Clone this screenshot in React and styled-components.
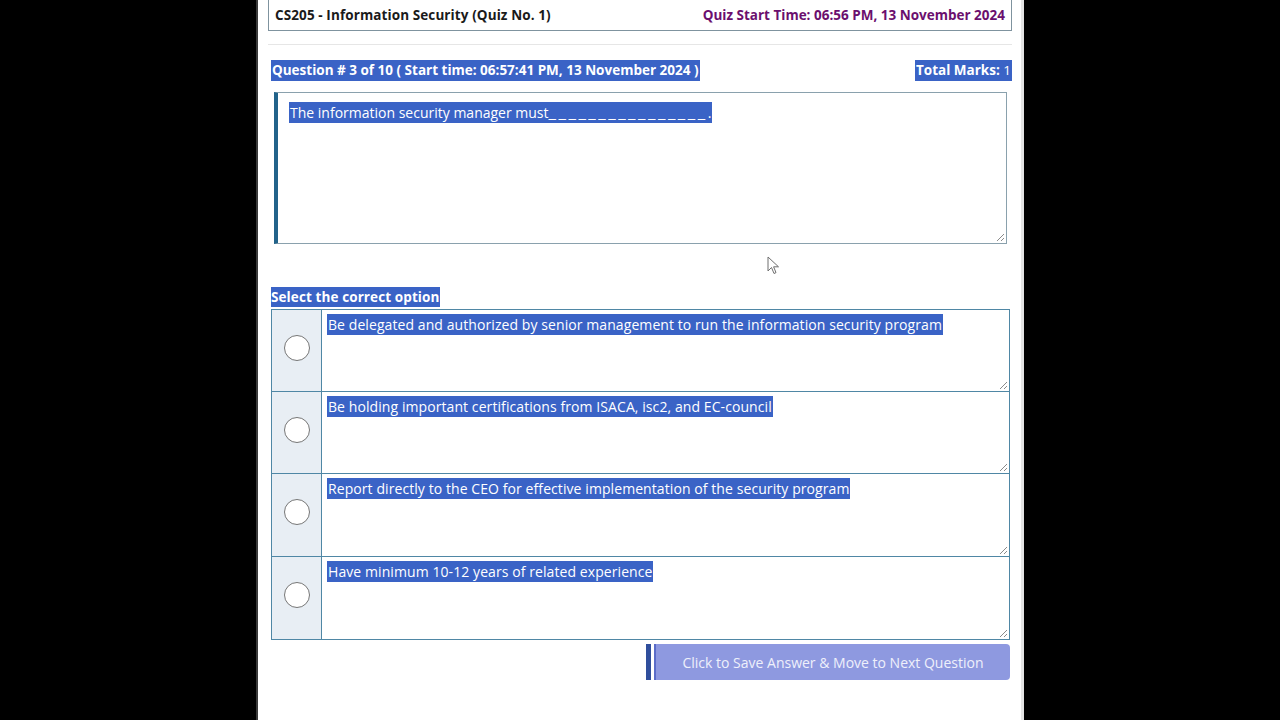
import React from "react";
import styled, { createGlobalStyle } from "styled-components";

const Global = createGlobalStyle`
  html, body { margin: 0; padding: 0; background: #000; }
  body { font-family: "Open Sans", "Noto Sans", sans-serif; }
  * { box-sizing: border-box; }
`;

const Page = styled.div`
  width: 1280px;
  height: 720px;
  background: #000;
  display: flex;
  justify-content: center;
  overflow: hidden;
`;

const Panel = styled.div`
  position: relative;
  width: 768px;
  height: 720px;
  background: #fff;
  border-left: 2px solid #3a3a3a;
  border-right: 3px solid #e4e4e4;
  padding: 0 9px 0 10px;
  display: flex;
  flex-direction: column;
`;

const Header = styled.div`
  margin-top: -1px;
  height: 32px;
  border: 1px solid #7f939f;
  display: flex;
  align-items: center;
  justify-content: space-between;
  padding: 0 6px 0 6px;
  font-size: 13.5px;
  font-weight: 700;
`;

const Course = styled.span`
  color: #1a1a1a;
  letter-spacing: 0.1px;
`;

const StartTime = styled.span`
  color: #6b0f6e;
  letter-spacing: 0;
`;

const Rule = styled.hr`
  margin: 13px 0 0 0;
  border: none;
  border-top: 1px solid #e6e6e6;
`;

const Sel = styled.span`
  background: #3a63c6;
  color: #fff;
  padding: ${p => p.$pad || "1px 1px"};
`;

const Gaps = styled.span`
  font-size: 17px;
  line-height: 0;
  letter-spacing: 2.5px;
`;

const QRow = styled.div`
  margin-top: 15px;
  display: flex;
  justify-content: space-between;
  align-items: center;
  padding-left: 3px;
  font-size: 13.5px;
  font-weight: 700;
  line-height: 19px;
  letter-spacing: 0;
`;

const Light = styled.span`
  font-weight: 400;
`;

const QuestionBox = styled.div`
  position: relative;
  margin: 11px 5px 0 6px;
  height: 152px;
  border: 1px solid #8aa1ad;
  border-left: 4px solid #22638a;
  padding: 11px 11px;
  font-size: 14px;
  line-height: 18px;
`;

const Resize = styled.svg`
  position: absolute;
  right: 1px;
  bottom: 1px;
`;

const Label = styled.div`
  margin-top: 44px;
  padding-left: 3px;
  font-size: 13.5px;
  font-weight: 700;
  line-height: 18px;
  letter-spacing: 0.1px;
`;

const Options = styled.div`
  margin: 3px 2px 0 3px;
  border: 1px solid #4f87a5;
  display: flex;
  flex-direction: column;
`;

const OptionRow = styled.div`
  display: grid;
  grid-template-columns: 50px 1fr;
  height: ${p => p.$h}px;
  border-top: ${p => (p.$first ? "none" : "1px solid #4f87a5")};
`;

const RadioCell = styled.div`
  background: #e8eef4;
  border-right: 1px solid #4f87a5;
  display: flex;
  align-items: center;
  justify-content: center;
`;

const Radio = styled.span`
  width: 26px;
  height: 26px;
  border-radius: 50%;
  border: 1.5px solid #767676;
  background: #fff;
  margin-bottom: 6px;
`;

const AnswerCell = styled.div`
  position: relative;
  padding: 6px 5px;
  font-size: 14px;
  line-height: 18px;
  letter-spacing: 0.08px;
`;

const Footer = styled.div`
  margin: 4px 2px 0 0;
  display: flex;
  justify-content: flex-end;
  align-items: stretch;
  gap: 3px;
  height: 36px;
`;

const SelBar = styled.span`
  width: 5px;
  background: #2f4e9c;
`;

const SaveButton = styled.button`
  width: 356px;
  border: none;
  border-left: 2px solid #5a6cc8;
  border-radius: 0 4px 4px 0;
  background: #8e99e0;
  color: #eef0fb;
  font-family: inherit;
  font-size: 14px;
  letter-spacing: 0;
  cursor: pointer;
`;

const Pointer = styled.svg`
  position: absolute;
  left: 509px;
  top: 256px;
`;

const ResizeIcon = () => (
  <Resize width="9" height="9" viewBox="0 0 9 9">
    <path d="M8 1 L1 8 M8 5 L5 8" stroke="#8a8a8a" strokeWidth="1" />
  </Resize>
);

const answers = [
  "Be delegated and authorized by senior management to run the information security program",
  "Be holding important certifications from ISACA, isc2, and EC-council",
  "Report directly to the CEO for effective implementation of the security program",
  "Have minimum 10-12 years of related experience",
];

const heights = [81, 82, 83, 83];

export default function App() {
  return (
    <>
      <Global />
      <Page>
        <Panel>
          <Header>
            <Course>CS205 - Information Security (Quiz No. 1)</Course>
            <StartTime>Quiz Start Time: 06:56 PM, 13 November 2024</StartTime>
          </Header>
          <Rule />
          <QRow>
            <Sel>Question # 3 of 10 ( Start time: 06:57:41 PM, 13 November 2024 )</Sel>
            <Sel>
              Total Marks: <Light>1</Light>
            </Sel>
          </QRow>
          <QuestionBox>
            <Sel>
              The information security manager must<Gaps>________________</Gaps>.
            </Sel>
            <ResizeIcon />
          </QuestionBox>
          <Label>
            <Sel $pad="1px 0">Select the correct option</Sel>
          </Label>
          <Options>
            {answers.map((a, i) => (
              <OptionRow key={i} $first={i === 0} $h={heights[i]}>
                <RadioCell>
                  <Radio />
                </RadioCell>
                <AnswerCell>
                  <Sel>{a}</Sel>
                  <ResizeIcon />
                </AnswerCell>
              </OptionRow>
            ))}
          </Options>
          <Footer>
            <SelBar />
            <SaveButton>Click to Save Answer &amp; Move to Next Question</SaveButton>
          </Footer>
          <Pointer width="13" height="20" viewBox="0 0 13 20">
            <path d="M1 1 L1 15 L4.5 11.5 L7 17.5 L9 16.6 L6.6 10.8 L11.5 10.8 Z" fill="#fff" stroke="#6f6f6f" strokeWidth="1" strokeLinejoin="round" />
          </Pointer>
        </Panel>
      </Page>
    </>
  );
}
